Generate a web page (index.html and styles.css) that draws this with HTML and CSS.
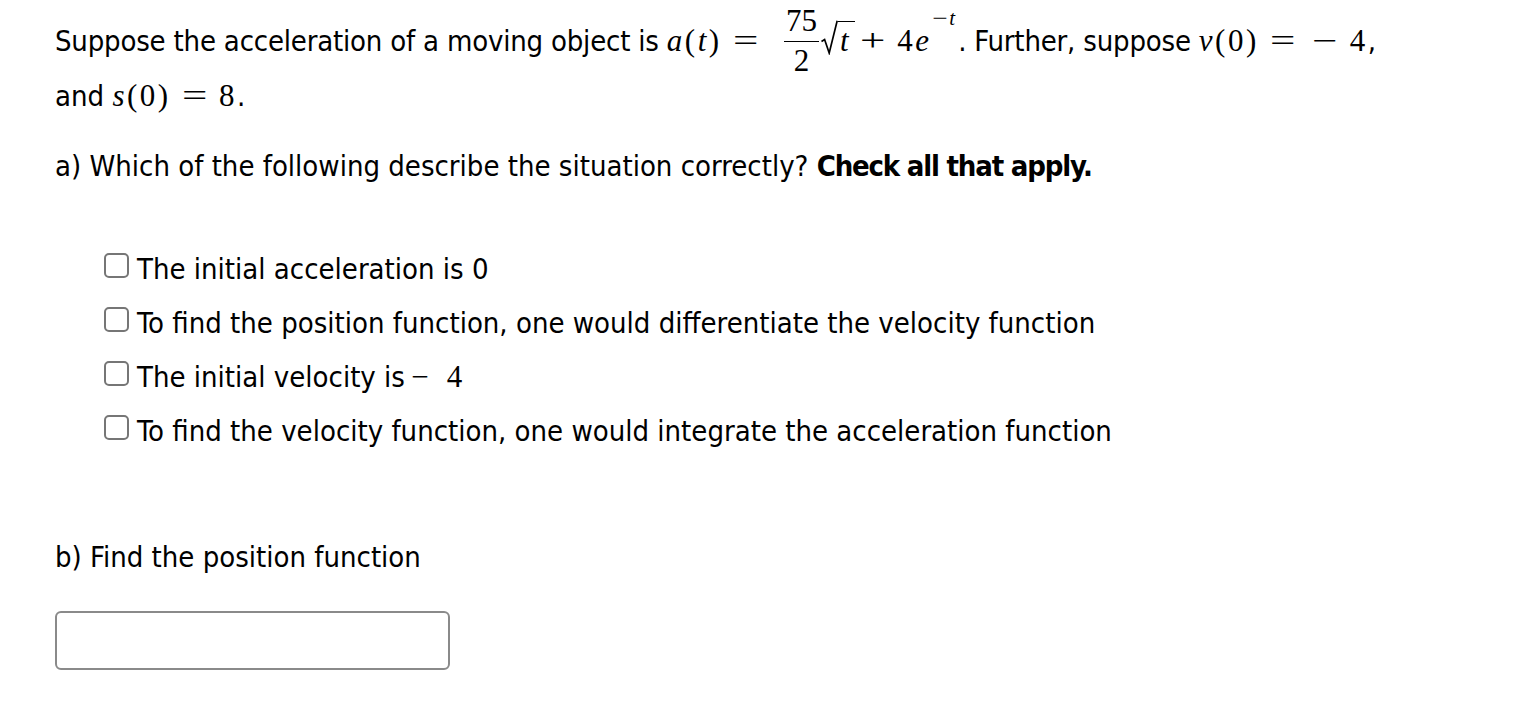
FILE: index.html
```html
<!DOCTYPE html>
<html lang="en">
<head>
<meta charset="utf-8">
<title>Problem</title>
<link rel="stylesheet" href="styles.css">
</head>
<body>
<div class="problem">
  <p class="intro"><span class="tight">Suppose the acceleration of a moving object is </span><span class="m"><i>a</i>(<i>t</i>)</span><span class="m op rel">=</span><span class="frac"><span class="num">75</span><span class="den">2</span></span><span class="sqrt"><svg class="rad" width="17" height="35" viewBox="0 0 17 35"><path d="M0.5 21.5 L3.6 19.5 L8.2 33 L16.2 0.8" fill="none" stroke="#000" stroke-width="1.7" stroke-linejoin="miter"/></svg><span class="radicand"><i>t</i></span></span><span class="m op bin">+</span><span class="m">4<i>e</i></span><span class="m sup"><span class="supminus">−</span><i>t</i></span><span class="tight">. Further, suppose </span><span class="m"><i>v</i>(0)</span><span class="m op rel">=</span><span class="m op neg">−</span><span class="m">4</span>,<br>and <span class="m"><i>s</i>(0)</span><span class="m op rel">=</span><span class="m">8</span>.</p>

  <p class="question">a) Which of the following describe the situation correctly? <b class="strong">Check all that apply.</b></p>

  <ul class="choices">
    <li class="choice"><input type="checkbox" class="cb"><span>The initial acceleration is 0</span></li>
    <li class="choice"><input type="checkbox" class="cb"><span>To find the position function, one would differentiate the velocity function</span></li>
    <li class="choice"><input type="checkbox" class="cb"><span>The initial velocity is <span class="m uminus">−</span><span class="m">4</span></span></li>
    <li class="choice"><input type="checkbox" class="cb"><span>To find the velocity function, one would integrate the acceleration function</span></li>
  </ul>

  <p class="question part-b">b) Find the position function</p>
  <input type="text" class="answer">
</div>
</body>
</html>
```

FILE: styles.css
```css
html, body {
  margin: 0;
  padding: 0;
  background: #fff;
}

body {
  color: #000;
  font-family: "DejaVu Sans", "Noto Sans", sans-serif;
  font-stretch: condensed;
  font-size: 29px;
}

.problem {
  padding: 14px 0 0 55px;
}

.intro,
.question {
  margin: 0;
  line-height: 55px;
}

.tight {
  letter-spacing: -0.2px;
}

.question {
  margin-top: 15px;
}

.strong {
  font-weight: bold;
  letter-spacing: -1.2px;
}

.m {
  font-family: "Liberation Serif", "DejaVu Serif", serif;
  font-size: 31px;
  line-height: 0;
  font-stretch: normal;
  letter-spacing: 2.5px;
}

.m i,
.radicand i {
  font-style: italic;
}

.op {
  display: inline-block;
  letter-spacing: 0;
  transform: scaleX(1.45);
}

.rel {
  margin: 0 16px 0 15px;
}

.bin {
  margin: 0 16px 0 9px;
}

.neg {
  margin: 0 16px 0 9px;
}

.uminus {
  letter-spacing: 0;
  margin: 0 18px 0 -2px;
}

.frac {
  display: inline-flex;
  flex-direction: column;
  align-items: stretch;
  vertical-align: 20px;
  margin: -9px 2px -9px 14px;
  font-family: "Liberation Serif", "DejaVu Serif", serif;
  font-size: 31px;
  font-stretch: normal;
  line-height: 31px;
  text-align: center;
}

.num {
  padding: 0 2px 5px;
  border-bottom: 1.5px solid #000;
}

.den {
  padding-top: 3px;
}

.sqrt {
  display: inline-block;
  white-space: nowrap;
  line-height: 0;
}

.rad {
  vertical-align: -4px;
}

.radicand {
  display: inline-block;
  font-family: "Liberation Serif", "DejaVu Serif", serif;
  font-size: 31px;
  font-stretch: normal;
  line-height: 31px;
  padding: 3.5px 6px 0 2px;
  border-top: 1.6px solid #000;
}

.sup {
  font-size: 21px;
  vertical-align: 26px;
  letter-spacing: 0;
  margin: 0 3px 0 2px;
}

.supminus {
  display: inline-block;
  transform: scaleX(1.3);
  margin: 0 3px 0 1px;
}

.choices {
  list-style: none;
  margin: 48px 0 0 49px;
  padding: 0;
}

.choice {
  display: flex;
  align-items: center;
  height: 54px;
  line-height: 54px;
}

.cb {
  appearance: none;
  -webkit-appearance: none;
  width: 25px;
  height: 25px;
  margin: 0 8px 7px 0;
  border: 2px solid #767676;
  border-radius: 5px;
  background: #fff;
  flex: none;
}

.part-b {
  margin-top: 72px;
}

.answer {
  display: block;
  box-sizing: border-box;
  width: 395px;
  height: 59px;
  margin: 26px 0 0 0;
  border: 2px solid #8a8a8a;
  border-radius: 6px;
  background: #fff;
}
```
